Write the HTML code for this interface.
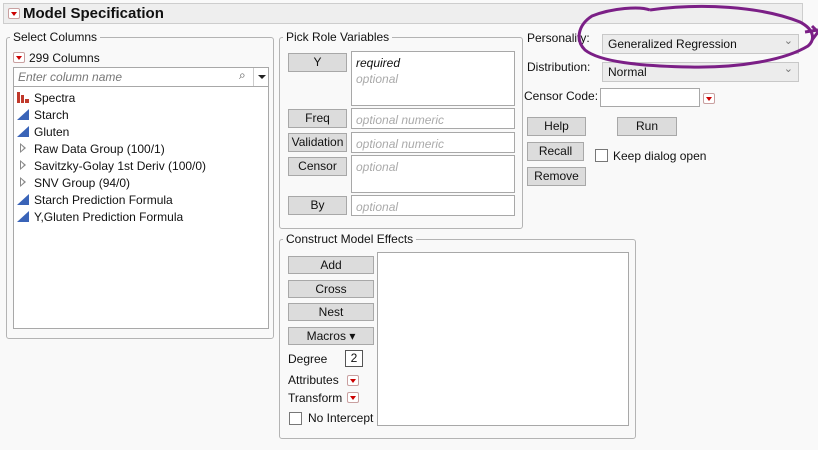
<!DOCTYPE html>
<html><head><style>
*{box-sizing:border-box;margin:0;padding:0}
body{width:818px;height:450px;background:#f9f9f9;font-family:"Liberation Sans",sans-serif;font-size:12px;color:#111;position:relative;overflow:hidden}
.a{position:absolute}
.grp{position:absolute;border:1px solid #b4b4b4;border-radius:3px}
.lbl{position:absolute;background:#f9f9f9;padding:0 3px;font-size:12px;line-height:14px}
.btn{position:absolute;background:#dcdcdc;border:1px solid #a8a8a8;text-align:center;font-size:12px;line-height:17px;color:#111}
.box{position:absolute;background:#fff;border:1px solid #a8a8a8;font-style:italic;color:#aaa;padding:3px 4px 1px;font-size:12px;line-height:16px}
.rt{position:absolute;width:12px;height:11px;background:#fff;border:1px solid #c9a0a0;border-radius:2px}
.rt:after{content:"";position:absolute;left:2px;top:3px;border-left:3.5px solid transparent;border-right:3.5px solid transparent;border-top:4px solid #c00}
.it{position:absolute;left:34px;font-size:12px;line-height:14px}
.tri{position:absolute;left:17px;width:0;height:0;border-left:12px solid transparent;border-bottom:11px solid #3a64b8}
.ar{position:absolute;left:20px;width:0;height:0;border-top:5px solid transparent;border-bottom:5px solid transparent;border-left:6px solid #888}
.ar:after{content:"";position:absolute;left:-5px;top:-3px;border-top:3px solid transparent;border-bottom:3px solid transparent;border-left:3.5px solid #fff}
.sel{position:absolute;background:#ececec;border:1px solid #c8c8c8;padding-left:5px;font-size:12px;line-height:19px}
.sel:after{content:"⌄";position:absolute;right:5px;top:-3px;color:#777;font-size:11px}
.cb{position:absolute;width:13px;height:13px;background:#fff;border:1px solid #777}
</style></head><body>
<div class="a" style="left:3px;top:3px;width:800px;height:21px;background:#eeeeee;border:1px solid #cdcdcd"></div>
<div class="rt" style="left:8px;top:8px"></div>
<div class="a" style="left:23px;top:5px;font-size:15px;font-weight:bold;line-height:18px">Model Specification</div>

<div class="grp" style="left:6px;top:37px;width:268px;height:302px"></div>
<div class="lbl" style="left:10px;top:30px">Select Columns</div>
<div class="rt" style="left:13px;top:52px"></div>
<div class="a" style="left:29px;top:51px;line-height:14px">299 Columns</div>
<div class="a" style="left:13px;top:67px;width:256px;height:20px;background:#fff;border:1px solid #a8a8a8"></div>
<div class="a" style="left:18px;top:70px;font-style:italic;color:#777;line-height:14px">Enter column name</div>
<div class="a" style="left:239px;top:68px;color:#555;font-size:12px">⌕</div>
<div class="a" style="left:253px;top:68px;width:1px;height:18px;background:#ccc"></div>
<div class="a" style="left:258px;top:75px;border-left:4px solid transparent;border-right:4px solid transparent;border-top:4px solid #222"></div>
<div class="a" style="left:13px;top:86px;width:256px;height:243px;background:#fff;border:1px solid #a8a8a8"></div>
<div class="a" style="left:17px;top:92px;width:3px;height:11px;background:#c0392b"></div>
<div class="a" style="left:21px;top:95px;width:3px;height:8px;background:#c0392b"></div>
<div class="a" style="left:25px;top:99px;width:4px;height:4px;background:#c0392b"></div>
<div class="it" style="top:91px">Spectra</div>
<div class="tri" style="top:109px"></div><div class="it" style="top:108px">Starch</div>
<div class="tri" style="top:126px"></div><div class="it" style="top:125px">Gluten</div>
<div class="ar" style="top:143px"></div><div class="it" style="top:142px">Raw Data Group (100/1)</div>
<div class="ar" style="top:160px"></div><div class="it" style="top:159px">Savitzky-Golay 1st Deriv (100/0)</div>
<div class="ar" style="top:177px"></div><div class="it" style="top:176px">SNV Group (94/0)</div>
<div class="tri" style="top:194px"></div><div class="it" style="top:193px">Starch Prediction Formula</div>
<div class="tri" style="top:211px"></div><div class="it" style="top:210px">Y,Gluten Prediction Formula</div>

<div class="grp" style="left:279px;top:37px;width:244px;height:192px"></div>
<div class="lbl" style="left:283px;top:30px">Pick Role Variables</div>
<div class="btn" style="left:288px;top:53px;width:59px;height:19px">Y</div>
<div class="box" style="left:351px;top:51px;width:164px;height:55px"><span style="color:#111">required</span><br>optional</div>
<div class="btn" style="left:288px;top:109px;width:59px;height:19px">Freq</div>
<div class="box" style="left:351px;top:108px;width:164px;height:21px">optional numeric</div>
<div class="btn" style="left:288px;top:133px;width:59px;height:19px">Validation</div>
<div class="box" style="left:351px;top:132px;width:164px;height:21px">optional numeric</div>
<div class="btn" style="left:288px;top:157px;width:59px;height:19px">Censor</div>
<div class="box" style="left:351px;top:155px;width:164px;height:38px">optional</div>
<div class="btn" style="left:288px;top:196px;width:59px;height:19px">By</div>
<div class="box" style="left:351px;top:195px;width:164px;height:21px">optional</div>

<div class="grp" style="left:279px;top:239px;width:357px;height:200px"></div>
<div class="lbl" style="left:283px;top:232px">Construct Model Effects</div>
<div class="btn" style="left:288px;top:256px;width:86px;height:18px">Add</div>
<div class="btn" style="left:288px;top:280px;width:86px;height:18px">Cross</div>
<div class="btn" style="left:288px;top:303px;width:86px;height:18px">Nest</div>
<div class="btn" style="left:288px;top:327px;width:86px;height:18px">Macros ▾</div>
<div class="a" style="left:377px;top:252px;width:252px;height:174px;background:#fff;border:1px solid #a8a8a8"></div>
<div class="a" style="left:288px;top:352px">Degree</div>
<div class="a" style="left:345px;top:350px;width:18px;height:17px;background:#fff;border:1px solid #555;text-align:center;line-height:15px">2</div>
<div class="a" style="left:288px;top:373px">Attributes</div><div class="rt" style="left:347px;top:375px"></div>
<div class="a" style="left:288px;top:391px">Transform</div><div class="rt" style="left:347px;top:392px"></div>
<div class="cb" style="left:289px;top:412px"></div>
<div class="a" style="left:308px;top:411px">No Intercept</div>

<div class="a" style="left:527px;top:31px">Personality:</div>
<div class="sel" style="left:602px;top:34px;width:197px;height:20px">Generalized Regression</div>
<div class="a" style="left:527px;top:60px">Distribution:</div>
<div class="sel" style="left:602px;top:62px;width:197px;height:20px">Normal</div>
<div class="a" style="left:524px;top:89px">Censor Code:</div>
<div class="a" style="left:600px;top:88px;width:100px;height:19px;background:#fff;border:1px solid #a8a8a8"></div>
<div class="rt" style="left:703px;top:93px"></div>
<div class="btn" style="left:527px;top:117px;width:59px;height:19px">Help</div>
<div class="btn" style="left:617px;top:117px;width:60px;height:19px">Run</div>
<div class="btn" style="left:527px;top:142px;width:57px;height:19px">Recall</div>
<div class="cb" style="left:595px;top:149px"></div>
<div class="a" style="left:613px;top:149px">Keep dialog open</div>
<div class="btn" style="left:527px;top:167px;width:59px;height:19px">Remove</div>

<svg class="a" style="left:0;top:0" width="818" height="450">
<path d="M650,10 C700,3 760,6 800,22 C815,30 815,40 808,46 C785,60 740,68 690,67 C640,66 600,62 585,50 C575,40 578,25 592,16 C612,8 640,6 650,10" fill="none" stroke="#7b1f86" stroke-width="3"/>
<path d="M805,32 L818,30 M812,26 L818,32 L812,40" fill="none" stroke="#7b1f86" stroke-width="3"/>
</svg>
</body></html>
